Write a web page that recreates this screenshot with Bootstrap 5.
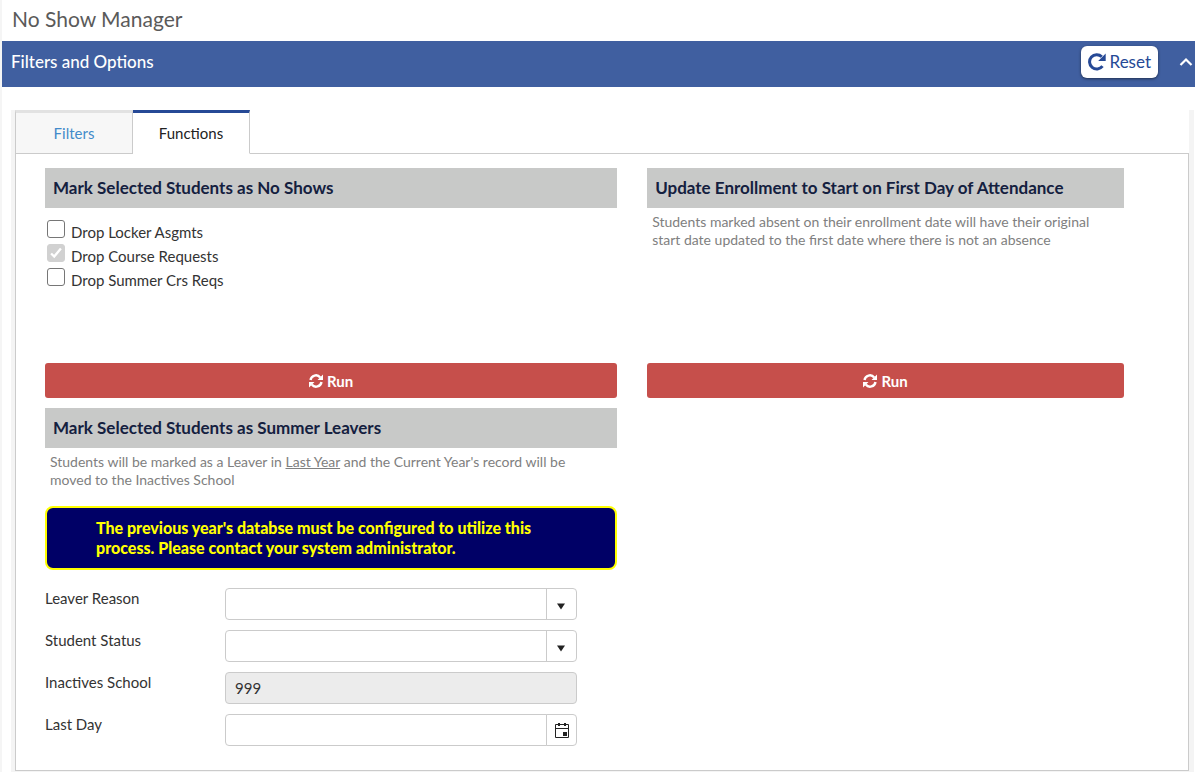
<!DOCTYPE html>
<html lang="en">
<head>
<meta charset="utf-8">
<meta name="viewport" content="width=device-width, initial-scale=1">
<title>No Show Manager</title>
<link href="https://cdn.jsdelivr.net/npm/bootstrap@5.3.0/dist/css/bootstrap.min.css" rel="stylesheet">
<style>
  :root { --line: #cbcbcb; --brand: #405fa0; --brand-dark: #264996; --ink: #333; }
  body { font-family: Lato, "Liberation Sans", sans-serif; font-size: 15px; line-height: 20px; color: var(--ink); }
  .page-shell { border-left: 2px solid #f5f5f5; }
  .page-title { font-size: 21px; line-height: 37px; height: 41px; padding-left: 10px; color: #5a5a5a; font-weight: 400; }
  .options-bar { background: var(--brand); height: 46px; padding-left: 9px; color: #fff; }
  .options-bar h2 { font-size: 17px; line-height: 20px; font-weight: 500; padding-bottom: 4px; }
  .btn-reset { background: #fff; color: var(--brand-dark); height: 32px; padding: 0 7px; border: 0; border-radius: 6px; font-size: 17px; line-height: 20px; box-shadow: 0 1px 3px rgba(0,0,0,.5); }
  .btn-reset:hover { background: #f3f6fc; color: var(--brand-dark); }
  .btn-fold { width: 19px; height: 32px; color: #fff; border: 0; margin-left: 18px; }
  .options-body { padding: 23px 1px 0 9px; }
  .tab-frame { border: solid #f4f4f4; border-width: 0 5px 1px 4px; }
  .tab-strip { border: 0; }
  .tab-strip .nav-link { width: 118px; height: 44px; padding: 0; margin: 0; border: 1px solid var(--line); border-top: 3px solid #e2e2e2; border-radius: 0; background: #f7f7f7; color: #428bca; }
  .tab-strip .nav-item + .nav-item .nav-link { border-left: 0; }
  .tab-strip .nav-link.active { width: 117px; background: #fff; color: #222; border-color: var(--brand-dark) var(--line) #fff; position: relative; }
  .tab-panel { border: 1px solid var(--line); margin-top: -1px; padding: 14px 64px 24px 29px; }
  .function-grid { display: grid; grid-template-columns: 6fr 5fr; column-gap: 30px; row-gap: 10px; }
  .function-head { background: #c8c9c8; color: #14203f; font-size: 17px; line-height: 20px; font-weight: 700; padding: 10px 8px; margin: 0; }
  .function-body { min-height: 155px; }
  .hint { color: #808080; font-size: 14px; line-height: 18px; padding: 5px 30px 0 5px; margin: 0; }
  .btn-run { background: #c64f4b; color: #fff; height: 35px; border: 0; border-radius: 3px; font-size: 15px; line-height: 20px; font-weight: 700; padding: 0; }
  .btn-run:hover { background: #b4433f; color: #fff; }
  .options-list { padding: 12px 2px 0; }
  .tick { height: 24px; gap: 6px; }
  .tick .form-check-input { width: 18px; height: 18px; margin: 0; border: 1px solid #767676; border-radius: 3px; }
  .tick .form-check-input:checked { background-image: url("data:image/svg+xml,%3Csvg xmlns='http://www.w3.org/2000/svg' viewBox='0 0 18 18'%3E%3Cpath d='M3.500 9.500l3.500 3.500 7.500-9' fill='none' stroke='%23fff' stroke-width='2.600'/%3E%3C/svg%3E"); }
  .tick .form-check-input:disabled { background-color: #d1d1d1; border-color: #d1d1d1; opacity: 1; }
  .tick label, .tick .form-check-input:disabled ~ label { padding-top: 2px; opacity: 1; }
  .notice { background: #000066; color: #ff0; border: 2px solid #ff0; border-radius: 8px; font-size: 16px; line-height: 20px; font-weight: 900; padding: 10px 49px; margin: 17px 0 18px; }
  .field-list { display: grid; gap: 10px; padding-right: 40px; }
  .field-row > label { width: 180px; flex: none; }
  .field-row .form-control, .field-row .form-select { height: 32px; border: 1px solid var(--line); border-radius: 4px; font-size: 15px; line-height: 20px; padding: 0 9px; color: var(--ink); min-height: 0; }
  .field-row .form-control:disabled { background: #ececec; }
  .field-row .form-select {
    background-image: url("data:image/svg+xml,%3Csvg xmlns='http://www.w3.org/2000/svg' viewBox='0 0 30 30'%3E%3Cpath d='M.5 0v30' stroke='%23cbcbcb'/%3E%3Cpath d='M11 14.500h8l-4 6z' fill='%23222'/%3E%3C/svg%3E");
    background-size: 30px 30px; background-position: right center; padding-right: 38px; }
  .field-row .input-group .form-control { border-radius: 4px 0 0 4px; }
  .btn-date { width: 31px; height: 32px; padding: 0; border: 1px solid var(--line); border-radius: 0 4px 4px 0; background: #fff; color: #222; }
</style>
</head>
<body>
<div class="page-shell">
  <h1 class="page-title m-0">No Show Manager</h1>
  <header class="options-bar d-flex align-items-center">
    <h2 class="m-0 me-auto">Filters and Options</h2>
    <button type="button" class="btn btn-reset d-flex align-items-center gap-1 mb-1">
      <svg width="18" height="18" viewBox="0 0 18 18" fill="none" aria-hidden="true"><path d="M14.500 13.200A7.200 7.200 0 1 1 13.800 3.700" stroke="currentColor" stroke-width="3"/><path d="M17.700.500v7.500h-7.500z" fill="currentColor"/></svg>
      <span>Reset</span>
    </button>
    <button type="button" class="btn btn-fold p-0 mb-1 d-flex align-items-center justify-content-center" aria-label="Collapse">
      <svg width="14" height="10" viewBox="0 0 14 10" fill="none" aria-hidden="true"><path d="M1.500 8 7 2.500 12.500 8" stroke="currentColor" stroke-width="2.200"/></svg>
    </button>
  </header>

  <main class="options-body">
    <div class="tab-frame">
      <ul class="nav nav-tabs tab-strip" role="tablist">
        <li class="nav-item" role="presentation"><button type="button" class="nav-link" role="tab" aria-selected="false">Filters</button></li>
        <li class="nav-item" role="presentation"><button type="button" class="nav-link active" role="tab" aria-selected="true">Functions</button></li>
      </ul>
      <div class="tab-panel" role="tabpanel">
        <div class="function-grid">
          <section>
            <h3 class="function-head">Mark Selected Students as No Shows</h3>
            <div class="function-body options-list">
              <div class="tick d-flex"><input class="form-check-input" type="checkbox" id="dropLocker"><label for="dropLocker">Drop Locker Asgmts</label></div>
              <div class="tick d-flex"><input class="form-check-input" type="checkbox" id="dropCourse" checked disabled><label for="dropCourse">Drop Course Requests</label></div>
              <div class="tick d-flex"><input class="form-check-input" type="checkbox" id="dropSummer"><label for="dropSummer">Drop Summer Crs Reqs</label></div>
            </div>
            <button type="button" class="btn btn-run w-100 d-flex align-items-center justify-content-center gap-1">
              <svg width="14" height="14" viewBox="0 0 14 14" aria-hidden="true"><g id="refreshArrows" fill="none" stroke="currentColor" stroke-width="2.400"><path d="M1.500 6A5.500 5.500 0 0 1 11.200 3.400M12.500 8A5.500 5.500 0 0 1 2.800 10.600"/><path d="M14 .500v5.500H8.500zM0 13.500V8h5.500z" fill="currentColor" stroke="none"/></g></svg>
              <span>Run</span>
            </button>
          </section>

          <section>
            <h3 class="function-head">Update Enrollment to Start on First Day of Attendance</h3>
            <div class="function-body">
              <p class="hint">Students marked absent on their enrollment date will have their original start date updated to the first date where there is not an absence</p>
            </div>
            <button type="button" class="btn btn-run w-100 d-flex align-items-center justify-content-center gap-1">
              <svg width="14" height="14" viewBox="0 0 14 14" aria-hidden="true"><use href="#refreshArrows"/></svg>
              <span>Run</span>
            </button>
          </section>

          <section>
            <h3 class="function-head">Mark Selected Students as Summer Leavers</h3>
            <p class="hint">Students will be marked as a Leaver in <u>Last Year</u> and the Current Year's record will be moved to the Inactives School</p>
            <div class="notice">The previous year's databse must be configured to utilize this process. Please contact your system administrator.</div>
            <form class="field-list">
              <div class="field-row d-flex"><label for="reason">Leaver Reason</label><select id="reason" class="form-select"><option></option></select></div>
              <div class="field-row d-flex"><label for="status">Student Status</label><select id="status" class="form-select"><option></option></select></div>
              <div class="field-row d-flex"><label for="school">Inactives School</label><input id="school" class="form-control" value="999" disabled></div>
              <div class="field-row d-flex"><label for="lastDay">Last Day</label>
                <div class="input-group">
                  <input id="lastDay" class="form-control" type="text">
                  <button type="button" class="btn btn-date d-flex align-items-center justify-content-center" aria-label="Open calendar">
                    <svg width="16" height="16" viewBox="0 0 16 16" fill="none" aria-hidden="true"><path d="M1.500 2.500h13v13h-13zM1 6.500h14" stroke="currentColor"/><path d="M4 1h2v3H4zM10 1h2v3h-2zM9 10h4v4H9z" fill="currentColor"/></svg>
                  </button>
                </div>
              </div>
            </form>
          </section>
        </div>
      </div>
    </div>
  </main>
</div>
<script src="https://cdn.jsdelivr.net/npm/bootstrap@5.3.0/dist/js/bootstrap.bundle.min.js"></script>
</body>
</html>
